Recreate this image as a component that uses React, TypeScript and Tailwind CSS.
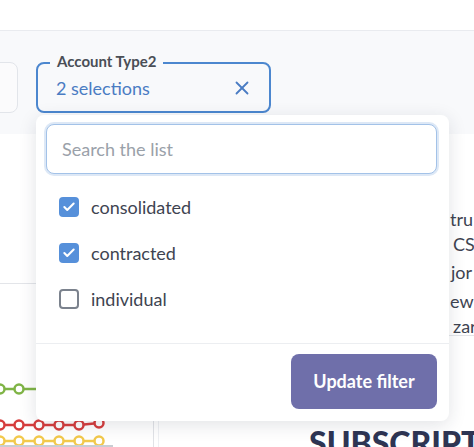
import { X, Check } from 'lucide-react';

const options = [
  { label: 'consolidated', checked: true },
  { label: 'contracted', checked: true },
  { label: 'individual', checked: false },
];

function Chart() {
  const xs = [0, 19, 39, 59, 79, 99];
  return (
    <svg width="155" height="163" viewBox="0 0 155 163" className="block">
      <line x1="-5" y1="105" x2="40" y2="105" stroke="#7fb446" strokeWidth="2.5" />
      {[0, 19].map((x) => (
        <circle key={'g' + x} cx={x} cy="105" r="4.5" fill="#fff" stroke="#7fb446" strokeWidth="2.5" />
      ))}
      <polyline points={xs.map((x, i) => `${x},${i === 5 ? 139 : 141}`).join(' ')} fill="none" stroke="#d63d3d" strokeWidth="2.5" />
      {xs.map((x, i) => (
        <circle key={'r' + x} cx={x} cy={i === 5 ? 139 : 141} r="4.5" fill="#fff" stroke="#d63d3d" strokeWidth="2.5" />
      ))}
      <line x1="0" y1="157" x2="99" y2="157" stroke="#f2c94c" strokeWidth="2.5" />
      {xs.map((x) => (
        <circle key={'y' + x} cx={x} cy="157" r="4.5" fill="#fff" stroke="#f2c94c" strokeWidth="2.5" />
      ))}
      <rect x="0" y="161" width="113" height="4" fill="#c9cdd3" />
    </svg>
  );
}

export default function App() {
  return (
    <div className="relative w-[474px] h-[447px] overflow-hidden bg-white font-['Lato',sans-serif]">
      <div className="h-[31px] bg-white border-b border-[#e9ebef]" />

      {/* filter bar */}
      <div className="relative z-10 h-[103px] bg-[#f8f9fb] flex items-start pt-[31px] gap-[18px]">
        <div className="w-[60px] -ml-[42px] h-[51px] rounded-lg border border-[#e2e5ea] bg-[#fbfbfc] shrink-0" />
        <div className="relative w-[235px] h-[51px] rounded-lg border-2 border-[#4c87cf] flex items-center pl-[18px] pr-[16px] shrink-0">
          <span className="absolute -top-[12px] left-[12px] px-[7px] bg-[#f8f9fb] text-[15px] font-bold leading-[18px] text-[#4a4e56]">
            Account Type2
          </span>
          <span className="flex-1 text-[18px] text-[#4a7cc3] leading-none">2 selections</span>
          <X size={22} strokeWidth={2} className="text-[#4a7cc3]" />

          {/* popover */}
          <div className="absolute top-[51px] -left-[2px] w-[413px] bg-white rounded-lg shadow-[0_4px_18px_rgba(30,40,60,0.13)]">
            <div className="pt-[9px] pl-[10px] pr-[12px]">
              <input
                placeholder="Search the list"
                className="w-full h-[50px] rounded-lg border border-[#a3c2e8] shadow-[0_0_0_2px_#dde8f6] pl-[15px] text-[18px] text-[#3e4451] placeholder:text-[#9aa1a9] outline-none bg-white"
              />
            </div>
            <div className="mt-[10px] mb-[21px] pl-[23px]">
              {options.map((o) => (
                <div key={o.label} className="h-[46px] flex items-center gap-[12px]">
                  {o.checked ? (
                    <span className="w-[20px] h-[20px] rounded-[4px] bg-[#5690da] flex items-center justify-center">
                      <Check size={14} strokeWidth={3.5} className="text-white" />
                    </span>
                  ) : (
                    <span className="w-[20px] h-[20px] rounded-[4px] border-2 border-[#7b828d] bg-white" />
                  )}
                  <span className="text-[18px] text-[#3e4451]">{o.label}</span>
                </div>
              ))}
            </div>
            <div className="border-t border-[#eceef1] pt-[10px] pb-[12px] pr-[12px] flex justify-end">
              <button className="w-[146px] h-[55px] rounded-lg bg-[#6f6faa] text-white text-[18px] font-bold">
                Update filter
              </button>
            </div>
          </div>
        </div>
      </div>

      {/* page content behind */}
      <div className="flex">
        <div className="w-[154px] shrink-0">
          <div className="h-[150px] border-b border-[#e3e5e9]" />
          <div className="border-r border-[#e1e3e7] h-[200px]">
            <Chart />
          </div>
        </div>
        <div className="flex-1 ml-[4px] border-l border-[#eef0f3]">
          <div className="h-[202px] border-b border-[#e3e5e9] pl-[291px] pt-[73px] text-[18px] text-[#3e4451] whitespace-nowrap">
            <div className="h-[25px] leading-[25px]">tru</div>
            <div className="h-[25px] leading-[25px] pl-[3px]">CS</div>
            <div className="h-[31px] leading-[31px] pl-[1px]">jor</div>
            <div className="h-[27px] leading-[27px]">ew</div>
            <div className="h-[23px] leading-[23px] pl-[3px]">zar</div>
          </div>
          <div className="pl-[150px] pt-[91px] text-[32px] leading-[32px] font-black text-[#2e3553] whitespace-nowrap">
            SUBSCRIPTION
          </div>
        </div>
      </div>
    </div>
  );
}
